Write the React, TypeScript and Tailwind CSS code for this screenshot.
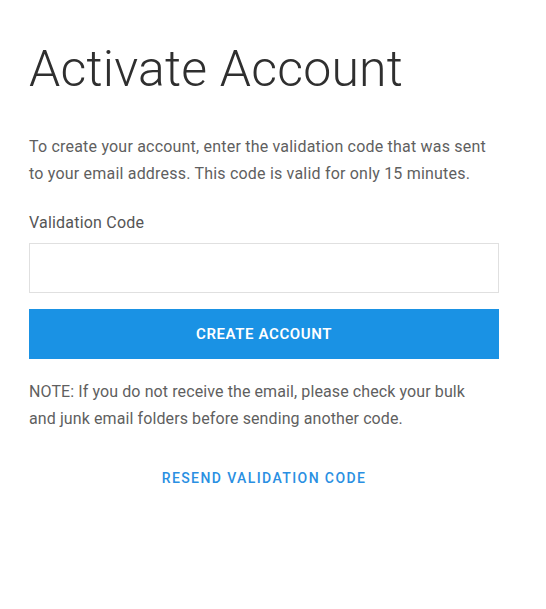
export default function App() {
  return (
    <div className="min-h-screen bg-white font-['Roboto',sans-serif]">
      <div className="w-[470px] ml-[29px] pt-[37px]">
        {/* Título */}
        <h1 className="text-[50px] leading-[64px] font-light text-[#2f2f2f] tracking-[0.2px]">
          Activate Account
        </h1>

        <p className="mt-[32px] text-[16px] leading-[27px] text-[#5f5f5f] tracking-[0.2px]">
          To create your account, enter the validation code that was sent
          <br />
          to your email address. This code is valid for only 15 minutes.
        </p>

        <label className="block mt-[26px] text-[16px] leading-[20px] text-[#555555] tracking-[0.2px]">
          Validation Code
        </label>
        <input
          type="text"
          className="block mt-[10px] w-full h-[50px] border border-[#e0e0e0] bg-white outline-none px-3"
        />

        <button className="block mt-[16px] w-full h-[50px] bg-[#1a92e4] text-white text-[15px] font-semibold tracking-[0.6px]">
          CREATE ACCOUNT
        </button>

        <p className="mt-[19px] text-[16px] leading-[27px] text-[#5f5f5f] tracking-[0.1px]">
          NOTE: If you do not receive the email, please check your bulk
          <br />
          and junk email folders before sending another code.
        </p>

        <div className="mt-[34px] text-center">
          <a className="text-[14px] font-medium tracking-[1.4px] text-[#2a8fe2] cursor-pointer">
            RESEND VALIDATION CODE
          </a>
        </div>
      </div>
    </div>
  )
}
